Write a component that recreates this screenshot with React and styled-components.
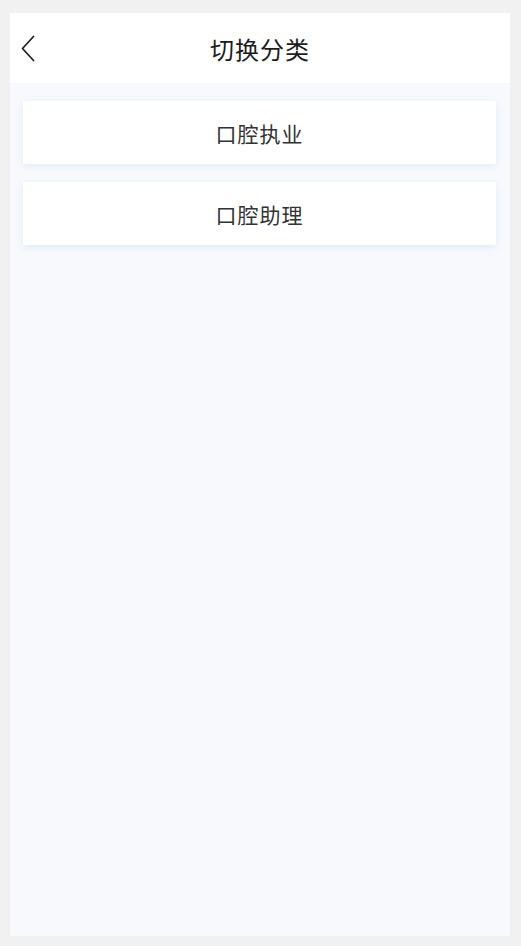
import React from "react";
import styled, { createGlobalStyle } from "styled-components";

const Global = createGlobalStyle`
  html, body { margin: 0; padding: 0; background: #f1f1f1; }
  body { font-family: "Noto Sans CJK SC", "Noto Sans", sans-serif; }
`;

const Frame = styled.div`
  margin: 13px 11px 0 10px;
  width: 500px;
  height: 923px;
  background: #f7f9fd;
  display: flex;
  flex-direction: column;
`;

const Header = styled.header`
  height: 70px;
  background: #ffffff;
  display: flex;
  align-items: center;
  justify-content: center;
  position: relative;
`;

const Back = styled.button`
  position: absolute;
  left: 7px;
  top: 50%;
  transform: translateY(-50%);
  background: none;
  border: 0;
  padding: 0;
  width: 22px;
  height: 30px;
  display: flex;
  align-items: center;
  justify-content: center;
`;

const Title = styled.h1`
  margin: 0;
  font-size: 24px;
  font-weight: 400;
  color: #1c1c1c;
  letter-spacing: 1px;
`;

const List = styled.div`
  display: flex;
  flex-direction: column;
  gap: 18px;
  padding: 18px 14px 0 13px;
`;

const Card = styled.div`
  height: 63px;
  background: #ffffff;
  box-shadow: 0 2px 6px rgba(200, 215, 240, 0.45);
  display: flex;
  align-items: center;
  justify-content: center;
  font-size: 21px;
  color: #333333;
  letter-spacing: 1px;
`;

export default function App() {
  return (
    <>
      <Global />
      <Frame>
        <Header>
          <Back aria-label="back">
            <svg width="16" height="27" viewBox="0 0 16 27" fill="none">
              <path d="M13.5 1.5 L2.5 13.5 L13.5 25.5" stroke="#222" strokeWidth="1.8" strokeLinecap="round" strokeLinejoin="round" />
            </svg>
          </Back>
          <Title>切换分类</Title>
        </Header>
        <List>
          <Card>口腔执业</Card>
          <Card>口腔助理</Card>
        </List>
      </Frame>
    </>
  );
}
